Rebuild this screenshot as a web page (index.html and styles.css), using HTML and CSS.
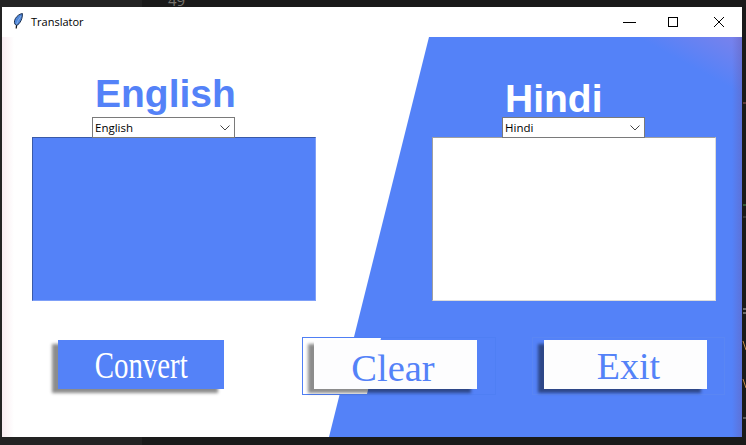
FILE: index.html
```html
<!DOCTYPE html>
<html>
    <head>
        <meta http-equiv="Content-Type" content="text/html; charset=UTF-8"/>
        <title>Translator</title>
        <link rel="stylesheet" href="styles.css">
    </head>
    <body>
        <span class="behind-number">49</span>
        <svg class="behind-ticks" width="4" height="445" viewBox="0 0 4 445">
            <path d="M1 103h3" stroke="#a05a60"/>
            <path d="M1 205h3" stroke="#4f9a55"/>
            <path d="M1 217h3" stroke="#555"/>
            <path d="M1 309h3M1 313h3" stroke="#bbb"/>
            <path d="M1 341l3 9" stroke="#c08a50"/>
            <path d="M1 379l3 9" stroke="#c08a50"/>
            <path d="M1 418h3" stroke="#999"/>
        </svg>
        <div class="window">
            <div class="titlebar">
                <svg class="feather" width="12" height="18" viewBox="0 0 12 18">
                    <path d="M3.200 15.500L3.600 12" stroke="#111" stroke-width="1.300" fill="none"/>
                    <path d="M3 12.200C1 11 1 8 2.400 5.500C4 2.800 6.500 1 9.400 .5C9.600 4 8.600 7 7 9.400C5.800 11.200 4.400 12.400 3 12.200Z" fill="#4f86d8" stroke="#10233f" stroke-width=".9"/>
                    <path d="M3.400 11.500C4.500 8.500 6 5.500 8 3" stroke="#a8c8f0" stroke-width=".6" fill="none"/>
                </svg>
                <span class="title">Translator</span>
                <svg class="controls" width="112" height="14" viewBox="0 0 112 14">
                    <path d="M0 7.500H13" stroke="#000" fill="none"/>
                    <rect x="45.500" y="2.500" width="9" height="9" stroke="#000" fill="none"/>
                    <path d="M91 2L101 12M101 2L91 12" stroke="#000" fill="none"/>
                </svg>
            </div>
            <div class="client">
                <div class="panels">
                    <div class="panel panel-left">
                        <h1 class="heading">English</h1>
                        <div class="combo">
                            <span>English</span>
                            <svg width="10" height="6" viewBox="0 0 10 6"><path d="M.5 .5L5 5L9.500 .5" stroke="#444" fill="none"/></svg>
                        </div>
                        <textarea class="box"></textarea>
                    </div>
                    <div class="panel panel-right">
                        <h1 class="heading">Hindi</h1>
                        <div class="combo">
                            <span>Hindi</span>
                            <svg width="10" height="6" viewBox="0 0 10 6"><path d="M.5 .5L5 5L9.500 .5" stroke="#444" fill="none"/></svg>
                        </div>
                        <textarea class="box"></textarea>
                    </div>
                </div>
                <div class="actions">
                    <div class="slot slot-convert"><div class="face"><span class="squeeze">Convert</span></div></div>
                    <div class="slot slot-clear"><div class="face">Clear</div></div>
                    <div class="slot slot-exit"><div class="face">Exit</div></div>
                </div>
            </div>
        </div>
    </body>
</html>
```

FILE: styles.css
```css
html, body{
    margin:0;
    height:445px;
    overflow:hidden;
}
body{
    position:relative;
    background:linear-gradient(to right, #232323 142px, #1a1a1a 142px);
    font-family:"Open Sans", "Liberation Sans", sans-serif;
}
.behind-number{
    position:absolute;
    left:168px;
    top:-9px;
    font-size:15px;
    line-height:18px;
    color:#77736c;
}
.behind-ticks{
    position:absolute;
    left:742px;
    top:0;
}
.window{
    position:absolute;
    left:2px;
    top:7px;
    width:740px;
    height:430px;
    display:flex;
    flex-direction:column;
    background:#fff;
}
.titlebar{
    height:30px;
    display:flex;
    align-items:center;
    padding-left:11px;
    color:#000;
}
.feather{
    margin-right:6px;
}
.title{
    font-size:11px;
    margin-top:-1px;
}
.controls{
    margin-left:auto;
    margin-right:7px;
    margin-top:-1px;
}
.client{
    position:relative;
    flex:1;
    background:linear-gradient(to right, #f8ecf1, #fff 12px);
}
/* the sloped blue area behind the right side */
.client::before{
    content:"";
    position:absolute;
    left:0;
    top:0;
    right:0;
    bottom:0;
    background:
        linear-gradient(to left, rgba(100,100,190,.55), rgba(84,130,248,0) 10px),
        linear-gradient(to bottom left, rgba(140,130,230,.7), rgba(84,130,248,0) 50px),
        #5482f8;
    clip-path:polygon(427px 0, 740px 0, 740px 400px, 327px 400px);
}
.panels{
    position:relative;
    display:flex;
    gap:116px;
    padding:35px 0 0 30px;
}
.panel{
    width:284px;
    display:flex;
    flex-direction:column;
    align-items:flex-start;
}
.heading{
    margin:0;
    height:45px;
    font-family:"Liberation Sans", Arial, sans-serif;
    font-size:39px;
    font-weight:bold;
}
.panel-left .heading{
    margin-left:63px;
    line-height:43px;
    color:#5482f8;
}
.panel-right .heading{
    margin-left:73px;
    line-height:53px;
    color:#fff;
}
.combo{
    position:relative;
    box-sizing:border-box;
    width:143px;
    height:21px;
    display:flex;
    align-items:center;
    justify-content:space-between;
    padding:0 3px 0 2px;
    border:1px solid #7a7a7a;
    background:#fff;
    color:#000;
    font-size:11.5px;
}
.combo svg{
    margin-right:1px;
}
.panel-left .combo{
    margin-left:60px;
}
.panel-right .combo{
    margin-left:70px;
}
.box{
    box-sizing:border-box;
    width:284px;
    height:164px;
    margin:-1px 0 0 0;
    padding:0;
    resize:none;
    display:block;
}
.panel-left .box{
    background:#5482f8;
    border:1px solid;
    border-color:#3a5aa8 #7fa0f8 #7fa0f8 #3a5aa8;
}
.panel-right .box{
    background:#fff;
    border:1px solid;
    border-color:#a0a0a0 #dcdcdc #dcdcdc #a0a0a0;
}
.actions{
    position:relative;
    display:flex;
    margin-top:36px;
    padding-left:44px;
}
.slot{
    position:relative;
    box-sizing:border-box;
    width:194px;
    height:58px;
    padding:3px 0 0 12px;
    border:1px solid transparent;
}
.slot-clear{
    margin-left:62px;
    padding:2px 0 0 11px;
    border-color:#4f7ff4;
}
.slot-clear::before{
    content:"";
    position:absolute;
    left:0;
    top:0;
    right:0;
    bottom:0;
    background:#fff;
    clip-path:polygon(0 0, 78px 0, 64px 100%, 0 100%);
}
.slot-exit{
    margin-left:36px;
    width:193px;
    padding:2px 0 0 11px;
    border-color:#5a86f4;
}
.slot-convert{
    border-width:0;
}
.face{
    position:relative;
    box-sizing:border-box;
    width:163px;
    height:49px;
    display:flex;
    align-items:center;
    justify-content:center;
    background:#fdfdfe;
    color:#5482f8;
    box-shadow:-6px 4px 3px rgba(0,0,0,.45);
    font-family:"Liberation Serif", "Times New Roman", serif;
    font-size:38px;
}
.slot-clear .face{
    padding:7px 5px 0 0;
    font-size:38.5px;
}
.slot-exit .face{
    padding:3px 0 0 6px;
}
.slot-convert .face{
    width:166px;
    padding-top:1px;
    background:#5482f8;
    color:#fff;
}
.squeeze{
    display:inline-block;
    transform:scaleX(.76);
}
```
